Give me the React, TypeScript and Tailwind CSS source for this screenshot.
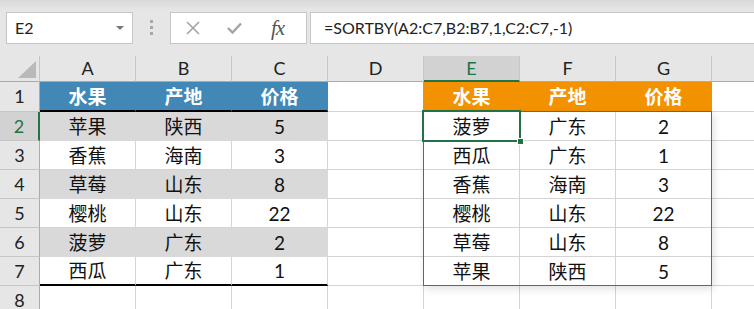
import React from "react";

const COLS = ["A", "B", "C", "D", "E", "F", "G"];
const header = ["水果", "产地", "价格"];
const leftRows = [
  ["苹果", "陕西", "5"],
  ["香蕉", "海南", "3"],
  ["草莓", "山东", "8"],
  ["樱桃", "山东", "22"],
  ["菠萝", "广东", "2"],
  ["西瓜", "广东", "1"],
];
const rightRows = [
  ["菠萝", "广东", "2"],
  ["西瓜", "广东", "1"],
  ["香蕉", "海南", "3"],
  ["樱桃", "山东", "22"],
  ["草莓", "山东", "8"],
  ["苹果", "陕西", "5"],
];

// colours / borders per cell, row 1..8, col 0..6
function cellClass(row: number, col: number): string {
  if (col <= 2) {
    if (row === 1)
      return "bg-[#4188b7] text-white font-bold border-r border-b-2 border-r-[#4188b7] border-b-black";
    if (row === 7) return "bg-white border-r border-b-2 border-r-[#d4d4d4] border-b-black";
    if (row <= 6 && row % 2 === 0)
      return "bg-[#d9d9d9] border-r border-b border-r-[#d9d9d9] border-b-[#d9d9d9]";
  }
  if (col >= 4 && row === 1)
    return "bg-[#f39200] text-white font-bold border-r border-b border-r-[#f39200] border-b-[#f39200]";
  if (col === 3 && row === 1)
    return "bg-white border-r border-b border-r-[#f39200] border-b-[#d4d4d4]";
  return "bg-white border-r border-b border-r-[#d4d4d4] border-b-[#d4d4d4]";
}

function rowValues(row: number): string[] {
  const vals = ["", "", "", "", "", "", ""];
  if (row === 1) {
    header.forEach((h, i) => {
      vals[i] = h;
      vals[i + 4] = h;
    });
  } else if (row >= 2 && row <= 7) {
    leftRows[row - 2].forEach((v, i) => (vals[i] = v));
    rightRows[row - 2].forEach((v, i) => (vals[i + 4] = v));
  }
  return vals;
}

const Toolbar = () => (
  <div className="h-[56px] flex items-start pt-[12px] bg-[linear-gradient(#d9d9d9,#e6e6e6_10px)]">
    {/* name box */}
    <div className="ml-[6px] w-[127px] h-[32px] bg-white border border-[#c6c6c6] flex items-center justify-between pl-[8px] pr-[8px]">
      <span className="text-[16px] text-[#222]">E2</span>
      <svg width="8" height="5" viewBox="0 0 8 5">
        <path d="M0 0 L8 0 L4 4 Z" fill="#777" />
      </svg>
    </div>
    {/* grip */}
    <div className="ml-[17px] mt-[8px] flex flex-col gap-[3px]">
      <div className="w-[3px] h-[3px] bg-[#a8a8a8]" />
      <div className="w-[3px] h-[3px] bg-[#a8a8a8]" />
      <div className="w-[3px] h-[3px] bg-[#a8a8a8]" />
    </div>
    {/* cancel / enter / fx */}
    <div className="ml-[17px] w-[137px] h-[32px] bg-white border border-[#c6c6c6] flex items-center">
      <svg className="ml-[15px]" width="14" height="14" viewBox="0 0 14 14">
        <path d="M1 1 L13 13 M13 1 L1 13" stroke="#a3a3a3" strokeWidth="1.6" />
      </svg>
      <svg className="ml-[27px]" width="15" height="12" viewBox="0 0 15 12">
        <path d="M1 6 L5.5 10.5 L14 1.5" stroke="#a3a3a3" strokeWidth="2.4" fill="none" />
      </svg>
      <span className="ml-[29px] font-['Liberation_Serif',serif] italic text-[21px] leading-none text-[#555] tracking-[-1px]">
        fx
      </span>
    </div>
    {/* formula */}
    <div className="ml-[3px] flex-1 h-[32px] bg-white border border-[#c6c6c6] border-r-0 flex items-center pl-[13px]">
      <span className="text-[16px] text-[#222]">=SORTBY(A2:C7,B2:B7,1,C2:C7,-1)</span>
    </div>
  </div>
);

const App = () => {
  const rows = [1, 2, 3, 4, 5, 6, 7, 8];
  return (
    <div className="w-[754px] h-[309px] overflow-hidden bg-white font-['Lato','Noto_Sans_CJK_SC',sans-serif]">
      <Toolbar />
      <div className="relative">
        {/* column headers */}
        <div className="flex h-[26px] bg-[#e6e6e6]">
          <div className="w-[40px] shrink-0 border-r border-b border-r-[#c6c6c6] border-b-[#ababab] flex items-end justify-end pr-[3px] pb-[3px]">
            <svg width="18" height="17" viewBox="0 0 18 17">
              <path d="M18 0 L18 17 L0 17 Z" fill="#b9b9b9" />
            </svg>
          </div>
          {COLS.map((c) =>
            c === "E" ? (
              <div
                key={c}
                className="w-[96px] shrink-0 bg-[#d2d2d2] border-r border-b-2 border-r-[#c6c6c6] border-b-[#217346] flex items-center justify-center text-[18px] text-[#217346]"
              >
                {c}
              </div>
            ) : (
              <div
                key={c}
                className="w-[96px] shrink-0 border-r border-b border-r-[#c6c6c6] border-b-[#ababab] flex items-center justify-center text-[18px] text-[#222]"
              >
                {c}
              </div>
            )
          )}
          <div className="flex-1 border-b border-b-[#ababab]" />
        </div>

        {rows.map((r) => {
          const vals = rowValues(r);
          return (
            <div key={r} className={r === 1 ? "flex h-[30px]" : "flex h-[29px]"}>
              {r === 2 ? (
                <div className="w-[40px] shrink-0 bg-[#d2d2d2] border-r-2 border-b border-r-[#217346] border-b-[#c6c6c6] flex items-center justify-center text-[18px] text-[#217346]">
                  {r}
                </div>
              ) : (
                <div className="w-[40px] shrink-0 bg-[#e6e6e6] border-r border-b border-r-[#ababab] border-b-[#c6c6c6] flex items-center justify-center text-[18px] text-[#222]">
                  {r}
                </div>
              )}
              {COLS.map((c, i) => (
                <div
                  key={c}
                  className={`w-[96px] shrink-0 flex items-center justify-center text-[19px] leading-none text-[#111] ${cellClass(r, i)}`}
                >
                  {vals[i]}
                </div>
              ))}
              <div className="flex-1 bg-white border-b border-b-[#d4d4d4]" />
            </div>
          );
        })}

        {/* spilled range outline */}
        <div className="absolute left-[423px] top-[55px] w-[289px] h-[175px] border border-[#2f6cc4] shadow-[2px_3px_8px_rgba(0,0,0,0.12)] pointer-events-none" />
        {/* active cell E2 */}
        <div className="absolute left-[422px] top-[54px] w-[99px] h-[32px] border-2 border-[#217346] pointer-events-none">
          <div className="absolute -right-[5px] -bottom-[5px] w-[7px] h-[7px] bg-[#217346] border border-white" />
        </div>
      </div>
    </div>
  );
};

export default App;
